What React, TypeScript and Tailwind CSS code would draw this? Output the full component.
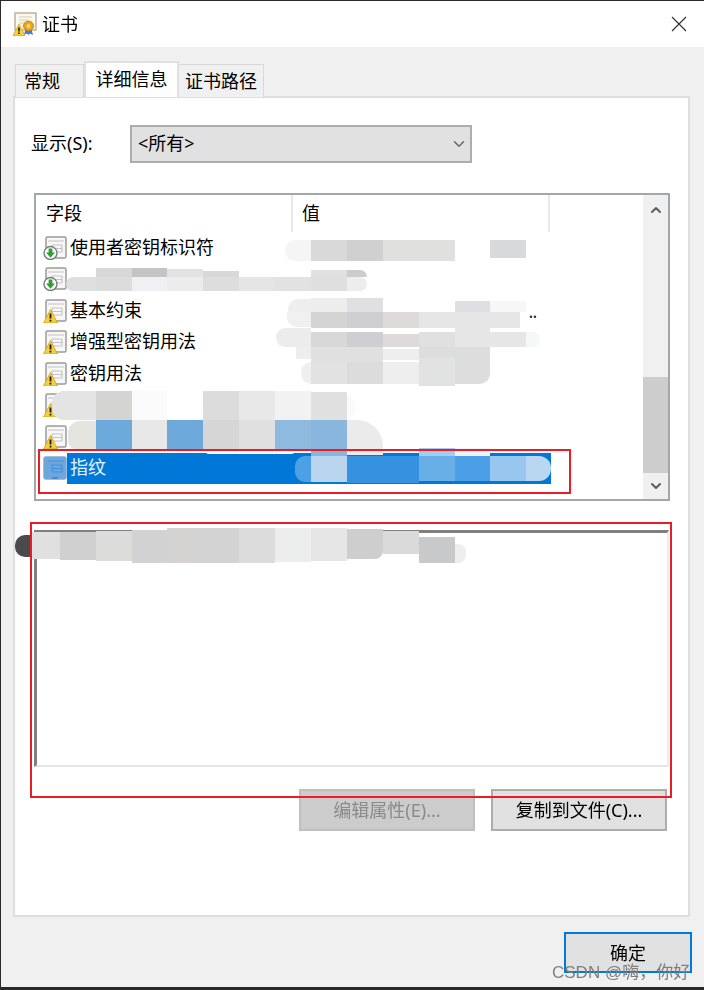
import React from "react";
import { ChevronDown, ChevronUp } from "lucide-react";

const FONT = "font-['Noto_Sans','Noto_Sans_CJK_SC',sans-serif]";

type Cell = [number, number, number, number, string, string?];

// mosaic cells painted over the redacted values: x, y, w, h, colour, corner class
const cells: Cell[] = [
  // row 1
  [285, 240, 26, 21, "#f5f5f5", "rounded-l-[10px]"],
  [311, 240, 36, 21, "#d9d9d9"],
  [347, 240, 36, 21, "#d0d0d0"],
  [383, 240, 72, 21, "#e0e0de"],
  [490, 240, 36, 18, "#d8d9da"],
  // row 2
  [96, 268, 36, 9, "#d8d8d8"],
  [132, 268, 35, 9, "#c4c4c4"],
  [167, 269, 36, 8, "#e2e2e2"],
  [203, 271, 36, 6, "#d8d8d8"],
  [311, 270, 36, 7, "#e0e0e0"],
  [347, 270, 20, 7, "#cccccc", "rounded-tr-[8px]"],
  [66, 277, 30, 14, "#dde0dc", "rounded-l-[8px]"],
  [96, 277, 36, 14, "#dcdcdc"],
  [132, 277, 35, 14, "#f0f0f2"],
  [167, 277, 36, 14, "#ececec"],
  [203, 277, 36, 14, "#dddddd"],
  [239, 277, 36, 14, "#e5e5e5"],
  [275, 277, 36, 14, "#e2e2e2"],
  [311, 277, 36, 14, "#dfdfdf"],
  [347, 277, 20, 14, "#ededed", "rounded-r-[8px]"],
  // rows 3 to 5, one smeared block
  [288, 299, 23, 13, "#eeeeee", "rounded-tl-[10px]"],
  [311, 298, 36, 14, "#ededed"],
  [347, 298, 36, 14, "#dfe0e2"],
  [455, 301, 35, 11, "#dfdfe2"],
  [490, 301, 36, 11, "#f7f7f7"],
  [287, 312, 24, 15, "#f0f0ee", "rounded-bl-[10px]"],
  [311, 312, 36, 16, "#d4d4d4"],
  [347, 312, 36, 16, "#cfcfd1"],
  [383, 312, 36, 16, "#dcdbd9"],
  [419, 312, 36, 16, "#e6e6e6"],
  [455, 312, 36, 16, "#e6e6e6"],
  [490, 312, 30, 16, "#e6e6e6"],
  [276, 328, 35, 19, "#ececec", "rounded-l-[10px]"],
  [311, 332, 36, 15, "#d8d8d8"],
  [347, 332, 36, 15, "#cfcfd2"],
  [383, 334, 36, 13, "#dcdbd9"],
  [419, 332, 36, 15, "#e0e0e0"],
  [455, 328, 35, 19, "#e6e6e6"],
  [490, 332, 36, 15, "#e6e6e6"],
  [526, 332, 14, 15, "#f6f7f7", "rounded-r-[8px]"],
  [296, 347, 15, 12, "#eeeeee"],
  [311, 347, 36, 15, "#e0e0e0"],
  [347, 347, 36, 15, "#e0e0e0"],
  [383, 349, 36, 11, "#eeeeee"],
  [419, 347, 36, 15, "#dddddd"],
  [455, 347, 35, 15, "#dddddd"],
  [301, 362, 10, 22, "#efefef", "rounded-l-[10px]"],
  [311, 362, 36, 22, "#e2e2e2"],
  [347, 362, 36, 22, "#dcdcdc"],
  [383, 362, 36, 22, "#eeeeee"],
  [419, 358, 36, 28, "#e1e3e3"],
  [455, 358, 35, 26, "#dddddd", "rounded-br-[10px]"],
  // row 6
  [52, 391, 44, 29, "#e4e4e4", "rounded-l-[12px]"],
  [96, 391, 36, 29, "#d4d4d2"],
  [132, 391, 35, 29, "#fbfbfb"],
  [203, 391, 36, 29, "#dcdcdc"],
  [239, 391, 36, 29, "#e8e8e8"],
  [275, 391, 36, 29, "#f2f2f2"],
  [311, 392, 36, 28, "#e0e0e0"],
  [347, 396, 8, 22, "#fafafa", "rounded-r-[8px]"],
  // row 7
  [68, 421, 28, 30, "#e5e5e0", "rounded-l-[12px]"],
  [96, 420, 36, 30, "#6caadc"],
  [132, 420, 35, 30, "#e8e8e8"],
  [167, 420, 36, 30, "#6ea9dc"],
  [203, 420, 36, 30, "#d6d6d6"],
  [239, 420, 36, 30, "#e0e0e0"],
  [275, 420, 36, 30, "#8fbae0"],
  [311, 420, 36, 36, "#89b6dd"],
  [347, 420, 36, 35, "#ebebeb", "rounded-tr-[26px]"],
  // selected row
  [205, 450, 90, 4, "#ffffff", "rounded-b-[4px]"],
  [295, 456, 16, 26, "#4ca0e6", "rounded-l-[10px]"],
  [311, 456, 36, 26, "#bad6ef"],
  [347, 456, 72, 27, "#3492e0"],
  [419, 448, 36, 8, "#a3cdf2"],
  [455, 448, 35, 8, "#edf5fc"],
  [419, 456, 36, 25, "#68afe8"],
  [455, 456, 35, 25, "#4a9fe6"],
  [490, 456, 36, 25, "#98c6ef"],
  [526, 456, 25, 25, "#b9d7f1", "rounded-r-[12px]"],
  // details box
  [15, 535, 20, 22, "#4a4a4c", "rounded-l-[10px]"],
  [30, 532, 30, 27, "#e0e0e0"],
  [60, 532, 36, 28, "#d0d0d0"],
  [96, 531, 36, 30, "#dcdcda"],
  [132, 530, 35, 33, "#d2d2d2"],
  [167, 528, 36, 35, "#d4d3d1"],
  [203, 528, 36, 35, "#d3d3d3"],
  [239, 528, 36, 35, "#dcdcdc"],
  [275, 528, 36, 34, "#eceeee"],
  [311, 528, 36, 33, "#e6e6e6"],
  [347, 529, 36, 30, "#cecece", "rounded-br-[8px]"],
  [383, 531, 36, 23, "#dadada"],
  [419, 537, 36, 26, "#c8c9ca"],
  [455, 544, 11, 19, "#eeeeee", "rounded-r-[8px]"],
];

const Mosaic = () => (
  <>
    {cells.map(([x, y, w, h, c, r], i) => (
      <div key={i} className={`absolute ${r ?? ""}`} style={{ left: x, top: y, width: w, height: h, background: c }} />
    ))}
  </>
);

const DocLines = ({ stroke }: { stroke: string }) => (
  <g fill="none" stroke={stroke} strokeWidth="1.2">
    <path d="M5 5h16M9 9h10M9 12.5h10M9 16h10M9 9v7M19 9v7" />
  </g>
);

const RowIcon = ({ kind }: { kind: "warn" | "down" | "sel" }) => {
  if (kind === "sel") {
    return (
      <svg viewBox="0 0 24 24" className="w-6 h-6 shrink-0">
        <rect x="1" y="1" width="22" height="22" rx="2" fill="#6ea6dc" stroke="#7aa9d6" strokeWidth="1.5" />
        <DocLines stroke="#3f92e0" />
        <path d="M9 22h6" stroke="#2f86d8" strokeWidth="1.5" />
      </svg>
    );
  }
  return (
    <svg viewBox="0 0 24 24" className="w-6 h-6 shrink-0">
      <rect x="3" y="1" width="20" height="21" rx="1.5" fill="#f7f7f7" stroke="#9b9b9b" strokeWidth="1.5" />
      <DocLines stroke="#c4c4c4" />
      {kind === "warn" ? (
        <>
          <path d="M7.5 10.5 14.5 24H0.5Z" fill="#f6cf3c" stroke="#c9a21c" strokeWidth="0.8" />
          <path d="M7.5 14.5v5M7.5 20.8v1.6" stroke="#1c1c1c" strokeWidth="1.8" />
        </>
      ) : (
        <>
          <circle cx="7.5" cy="17" r="6.5" fill="#ffffff" stroke="#7d7d7d" strokeWidth="1.4" />
          <path d="M5.6 12.5h3.8v4h2.6L7.5 21.8 3 16.5h2.6Z" fill="#2f9e35" />
        </>
      )}
    </svg>
  );
};

const TitleIcon = () => (
  <svg viewBox="0 0 24 24" className="w-6 h-6 shrink-0">
    <rect x="2" y="1" width="21" height="17" fill="#fbf8ef" stroke="#b8ad98" strokeWidth="1.4" />
    <path d="M6 5h13M6 8h9M6 11h6" stroke="#d8c9a8" strokeWidth="1.2" />
    <path d="M12.5 17l-1.5 6 3-1.5 1.5 1.5 1.5-1.5 3 1.5-1.5-6Z" fill="#3f78d6" />
    <circle cx="15.5" cy="14" r="5" fill="#eaa41e" stroke="#b87a10" strokeWidth="0.8" />
    <circle cx="15.5" cy="14" r="2" fill="#f8d672" />
    <path d="M6 12 12 23.5H0Z" fill="#f6cf3c" stroke="#c9a21c" strokeWidth="0.7" />
    <path d="M6 15.5v4M6 20.6v1.5" stroke="#1c1c1c" strokeWidth="1.6" />
  </svg>
);

const rows: { label: string; kind: "warn" | "down" | "sel" }[] = [
  { label: "使用者密钥标识符", kind: "down" },
  { label: "", kind: "down" },
  { label: "基本约束", kind: "warn" },
  { label: "增强型密钥用法", kind: "warn" },
  { label: "密钥用法", kind: "warn" },
  { label: "", kind: "warn" },
  { label: "", kind: "warn" },
  { label: "指纹", kind: "sel" },
];

export default function App() {
  return (
    <div className={`relative w-[704px] h-[990px] overflow-hidden flex flex-col bg-[#f0f0f0] border-l border-t border-b-[3px] border-[#2a2a2a] text-[18px] leading-none text-black ${FONT}`}>
      {/* 제목 표시줄 */}
      <div className="h-[46px] shrink-0 bg-white flex items-center pl-3 pr-[17px] blur-[0.3px]">
        <TitleIcon />
        <span className="ml-[5px]">证书</span>
        <svg viewBox="0 0 16 16" className="w-4 h-4 ml-auto" fill="none" stroke="#333" strokeWidth="1.2">
          <path d="M1 1l14 14M15 1 1 15" />
        </svg>
      </div>

      <div className="flex-1 flex flex-col pl-3 pr-[14px] pt-[14px] blur-[0.3px]">
        {/* 탭 */}
        <div className="h-[36px] shrink-0 flex items-end pl-[2px] relative z-10 -mb-px">
          <div className="w-[69px] h-[33px] flex items-center pl-[8px] bg-[#f0f0f0] border border-b-0 border-[#d9d9d9]">常规</div>
          <div className="w-[95px] h-[36px] flex items-center justify-center pb-[3px] bg-white border-2 border-b-0 border-[#e0e0e0]">详细信息</div>
          <div className="w-[85px] h-[33px] flex items-center justify-center bg-[#f0f0f0] border border-b-0 border-l-0 border-[#d9d9d9]">证书路径</div>
        </div>

        <div className="h-[821px] bg-white border-2 border-[#dedede] flex flex-col pl-[16px] pr-[21px] pt-[27px]">
          {/* 표시 선택 */}
          <div className="flex items-center h-[38px] shrink-0">
            <span className="w-[99px] pb-[2px]">显示(S):</span>
            <div className="w-[342px] h-full bg-[#e1e1e1] border-2 border-[#adadad] flex items-center pl-[6px] pr-[2px]">
              <span className="pb-[2px]">&lt;所有&gt;</span>
              <ChevronDown className="ml-auto text-[#666]" size={18} strokeWidth={2} />
            </div>
          </div>

          {/* 필드 목록 */}
          <div className="mt-[30px] ml-[3px] w-[636px] h-[308px] shrink-0 border-2 border-[#a3a7ab] flex">
            <div className="flex-1 flex flex-col min-w-0">
              <div className="h-[37px] shrink-0 flex items-center">
                <span className="w-[257px] h-full flex items-center pl-[10px] pb-[2px] border-r-2 border-[#e8e8e8]">字段</span>
                <span className="w-[257px] h-full flex items-center pl-[9px] pb-[2px] border-r-2 border-[#e8e8e8]">值</span>
              </div>
              {rows.map((r, i) => (
                <div key={i} className="h-[31.5px] shrink-0 flex items-center pl-[7px]">
                  <RowIcon kind={r.kind} />
                  {r.kind === "sel" ? (
                    <span className="w-[484px] h-[31px] flex items-center pl-[3px] pb-[2px] bg-[#0078d7] text-[#e6f2fb]">{r.label}</span>
                  ) : (
                    <span className="ml-[3px] pb-[2px]">{r.label}</span>
                  )}
                </div>
              ))}
            </div>
            {/* 스크롤바 */}
            <div className="w-[25px] shrink-0 bg-[#f0f0f0] flex flex-col items-center">
              <div className="h-[30px] flex items-center"><ChevronUp size={16} strokeWidth={3} className="text-[#606060]" /></div>
              <div className="mt-[152px] w-full h-[96px] bg-[#cdcdcd]" />
              <div className="h-[26px] flex items-center"><ChevronDown size={16} strokeWidth={3} className="text-[#606060]" /></div>
            </div>
          </div>

          {/* 상세 값 */}
          <div className="mt-[29px] ml-[3px] w-[635px] h-[237px] shrink-0 border-t-[3px] border-l-[3px] border-r-2 border-b-2 border-t-[#808080] border-l-[#808080] border-r-[#ececec] border-b-[#e6e6e6]" />

          {/* 버튼 */}
          <div className="mt-[22px] flex justify-end gap-[16px]">
            <div className="w-[176px] h-[42px] flex items-center justify-center bg-[#cccccc] border-2 border-[#bfbfbf] text-[#8a8a8a]">编辑属性(E)...</div>
            <div className="w-[176px] h-[42px] flex items-center justify-center bg-[#e1e1e1] border-2 border-[#adadad]">复制到文件(C)...</div>
          </div>
        </div>

        <div className="flex justify-end pt-[15px]">
          <div className="w-[128px] h-[41px] -mr-[2px] flex items-center justify-center bg-[#e1e1e1] border-2 border-[#0078d7]">确定</div>
        </div>
      </div>

      {/* 가림 처리와 표시 상자 */}
      <div className="absolute -left-px -top-px w-[704px] h-[990px] pointer-events-none">
        <Mosaic />
        <span className="absolute left-[529px] top-[306px] text-[14px] font-bold text-[#333]">..</span>
        <div className="absolute left-[38px] top-[449px] w-[533px] h-[45px] border-2 border-[#ed1c24]" />
        <div className="absolute left-[30px] top-[522px] w-[642px] h-[276px] border-2 border-[#ed1c24]" />
        <span className="absolute left-[552px] top-[964px] text-[17px] text-[#7f7f7f] whitespace-nowrap font-['Liberation_Sans','Noto_Sans_CJK_SC',sans-serif]">CSDN @嗨，你好</span>
      </div>
    </div>
  );
}
